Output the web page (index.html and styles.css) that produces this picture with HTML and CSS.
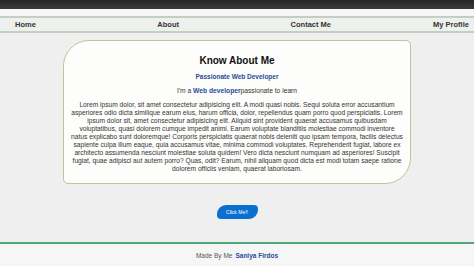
FILE: index.html
```html
<!DOCTYPE html>
<html>
<head>
<meta charset="utf-8">
<link rel="stylesheet" href="styles.css">
</head>
<body>
<div class="topbar"></div>
<div class="strip"></div>
<nav class="nav">
  <a class="nav-item">Home</a>
  <a class="nav-item">About</a>
  <a class="nav-item">Contact Me</a>
  <a class="nav-item">My Profile</a>
</nav>
<main class="main">
  <section class="card">
    <h1 class="title">Know About Me</h1>
    <p class="subtitle">Passionate Web Developer</p>
    <p class="intro">I'm a <b class="hl">Web developer</b>passionate to learn</p>
    <p class="body-text">Lorem ipsum dolor, sit amet consectetur adipisicing elit. A modi quasi nobis. Sequi soluta error accusantium asperiores odio dicta similique earum eius, harum officia, dolor, repellendus quam porro quod perspiciatis. Lorem ipsum dolor sit, amet consectetur adipisicing elit. Aliquid sint provident quaerat accusamus quibusdam voluptatibus, quasi dolorem cumque impedit animi. Earum voluptate blanditiis molestiae commodi inventore natus explicabo sunt doloremque! Corporis perspiciatis quaerat nobis deleniti quo ipsam tempora, facilis delectus sapiente culpa illum eaque, quia accusamus vitae, minima commodi voluptates. Reprehenderit fugiat, labore ex architecto assumenda nesciunt molestiae soluta quidem! Vero dicta nesciunt numquam ad asperiores! Suscipit fugiat, quae adipisci aut autem porro? Quas, odit? Earum, nihil aliquam quod dicta est modi totam saepe ratione dolorem officiis veniam, quaerat laboriosam.</p>
  </section>
  <div class="btn-row"><button class="btn">Click Me!!</button></div>
</main>
<footer class="footer">Made By Me <b class="hl">Saniya Firdos</b></footer>
</body>
</html>
```
FILE: styles.css
```css
html, body {
  margin: 0;
  padding: 0;
}
body {
  width: 474px;
  height: 266px;
  overflow: hidden;
  background: #efeff0;
  font-family: "Liberation Sans", Arial, sans-serif;
  color: #222;
  display: flex;
  flex-direction: column;
}
.topbar {
  height: 9px;
  background: linear-gradient(#262626, #3a3a3a);
}
.strip {
  height: 7px;
  background: #f5f6f5;
}
.nav {
  display: flex;
  justify-content: space-between;
  align-items: center;
  height: 13px;
  background: #eef0ee;
  border-top: 2px solid #c4cfc4;
  border-bottom: 2px solid #c4cfc4;
}
.nav-item {
  width: 51px;
  text-align: center;
  font-size: 7.5px;
  font-weight: bold;
  color: #333;
}
.nav-item:last-child {
  width: 46px;
}
.main {
  display: flex;
  flex-direction: column;
  align-items: center;
  padding-top: 7px;
  flex: 1;
}
.card {
  width: 332px;
  padding: 11px 7px 10px;
  background: #fdfdfb;
  border: 1px solid #b7c994;
  border-radius: 26px 5px 26px 5px;
  text-align: center;
}
.title {
  margin: 0;
  font-size: 10px;
  line-height: 17px;
  font-weight: bold;
  color: #111;
}
.subtitle {
  margin: 3px 0 0;
  font-size: 6.5px;
  line-height: 9px;
  font-weight: bold;
  color: #2c4a9a;
}
.intro {
  margin: 5px 0 0;
  font-size: 6.7px;
  line-height: 9px;
  color: #333;
}
.hl {
  color: #2c4a9a;
  font-weight: bold;
}
.body-text {
  margin: 6px 0 0;
  font-size: 6.65px;
  line-height: 8px;
  color: #333;
}
.btn-row {
  margin-top: 21px;
  display: flex;
  justify-content: center;
}
.btn {
  width: 41px;
  height: 14px;
  padding: 0;
  border: none;
  background: #0b6fd0;
  color: #fff;
  font-family: "Liberation Sans", Arial, sans-serif;
  font-size: 5px;
  border-radius: 9px 4px 9px 4px;
}
.footer {
  height: 22px;
  border-top: 2px solid #4fa97c;
  background: #f6f6f6;
  display: flex;
  align-items: center;
  justify-content: center;
  font-size: 6.5px;
  color: #555;
  gap: 3px;
}
.footer .hl {
  color: #2c4a9a;
}
```
